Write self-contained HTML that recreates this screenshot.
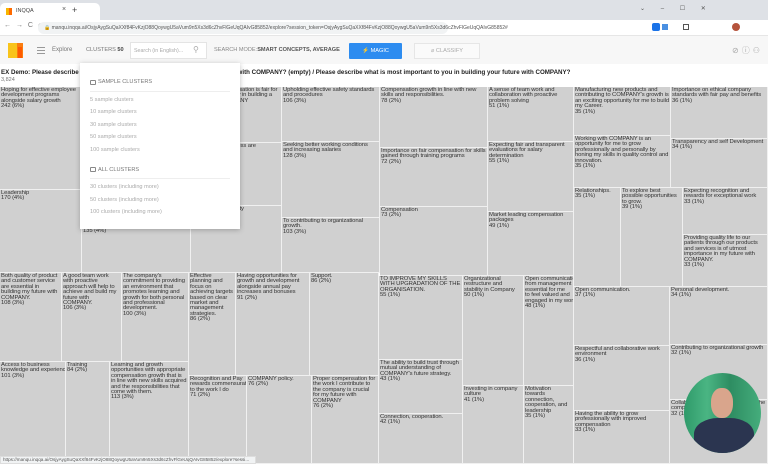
<!DOCTYPE html>
<html><head><meta charset="utf-8"><style>
*{box-sizing:border-box;margin:0;padding:0}
body{width:768px;height:464px;overflow:hidden;position:relative;background:#fff;font-family:"Liberation Sans",Arial,sans-serif}
.a{position:absolute}
.t{position:absolute;background:#d0d0d0;border-right:1.5px solid #f0f0f0;border-bottom:1.5px solid #f0f0f0;font-size:5.9px;letter-spacing:-0.1px;line-height:5.4px;color:#333;padding:1px 1px;overflow:hidden}
.dd{font-size:5.6px;color:#aaa;position:absolute;left:10px}
</style></head><body>
<div class="a" style="left:0;top:0;width:768px;height:20px;background:#dee1e6"></div>
<div class="a" style="left:0;top:3px;width:100px;height:17px;background:#fff;border-radius:5px 5px 0 0"></div>
<div class="a" style="left:6px;top:8px;width:3px;height:7px;background:#f7b500"></div><div class="a" style="left:9px;top:8px;width:3px;height:7px;background:#ff6a00"></div>
<div class="a" style="left:16px;top:8px;font-size:5.5px;color:#444">INQQA</div>
<div class="a" style="left:62px;top:6px;font-size:7px;color:#555">×</div>
<div class="a" style="left:72px;top:5px;font-size:9px;color:#444">+</div>
<div class="a" style="left:640px;top:5px;font-size:6px;color:#555;word-spacing:14px">⌄ – ☐ ✕</div>
<div class="a" style="left:0;top:20px;width:768px;height:16px;background:#fff;border-bottom:1px solid #e6e6e6"></div>
<div class="a" style="left:4px;top:22px;font-size:7px;color:#777;word-spacing:3px">← → C ⌂</div>
<div class="a" style="left:38px;top:22px;width:410px;height:12px;background:#f1f3f4;border-radius:6px"></div>
<div class="a" style="left:44px;top:25px;font-size:5px;color:#555;white-space:nowrap">🔒 manqu.inqqa.ai/OsjyAygSuQaXXf84FvKzjO88QoywgU5aVum9n5Xs3d6cZhvFlGeUqQAIvG85852/explore?session_token=OsjyAygSuQaXXf84FvKzjO88QoywgU5aVum9n5Xs3d6cZhvFlGeUqQAIvG85852#</div>
<div class="a" style="left:652px;top:23px;width:8px;height:8px;background:#1a73e8;border-radius:2px"></div>
<div class="a" style="left:662px;top:24px;width:6px;height:6px;background:#4a90e2"></div>
<div class="a" style="left:683px;top:24px;width:6px;height:6px;border:1px solid #555"></div>
<div class="a" style="left:732px;top:23px;width:8px;height:8px;background:#b5533c;border-radius:50%"></div>
<div class="a" style="left:0;top:36px;width:768px;height:28px;background:#f7f7f7"></div>
<div class="a" style="left:8px;top:43px;width:9px;height:15px;background:#f9c41a"></div>
<div class="a" style="left:17px;top:43px;width:6px;height:15px;background:#fa7d0f"></div>
<div class="a" style="left:18px;top:47px;width:4px;height:11px;background:#ff5a00"></div>
<div class="a" style="left:37px;top:47px;width:8px;height:1px;background:#999;box-shadow:0 3px 0 #999,0 6px 0 #999"></div>
<div class="a" style="left:52px;top:47px;font-size:6px;color:#777">Explore</div>
<div class="a" style="left:86px;top:47px;font-size:5.6px;color:#777">CLUSTERS <b style="color:#444">50</b></div>
<div class="a" style="left:130px;top:42px;width:77px;height:17px;border:1px solid #e4e4e4;background:#fff"></div>
<div class="a" style="left:134px;top:48px;font-size:5.3px;color:#aaa">Search (in English)...</div>
<div class="a" style="left:193px;top:45px;font-size:8px;color:#aaa">⚲</div>
<div class="a" style="left:214px;top:47px;font-size:5.6px;color:#888">SEARCH MODE:<b style="color:#555">SMART CONCEPTS, AVERAGE</b></div>
<div class="a" style="left:349px;top:43px;width:53px;height:16px;background:#2d8cf0;border-radius:1px;color:#fff;font-size:5.6px;text-align:center;line-height:16px">⚡ MAGIC</div>
<div class="a" style="left:414px;top:43px;width:66px;height:16px;border:1px solid #e6e6e6;background:#fafafa;color:#aaa;font-size:5.6px;text-align:center;line-height:15px">⌀ CLASSIFY</div>
<div class="a" style="left:732px;top:45px;font-size:8px;color:#aaa;letter-spacing:3px">⊘ⓘ⚇</div>
<div class="a" style="left:1px;top:69px;font-size:6.2px;font-weight:bold;color:#222;white-space:nowrap">EX Demo: Please describe what is most important to you in building your future with COMPANY? (empty) / Please describe what is most important to you in building your future with COMPANY?</div>
<div class="a" style="left:1px;top:77px;font-size:5.5px;color:#777">3,824</div>
<div class="t" style="left:0;top:87px;width:82px;height:103px">Hoping for effective employee development programs alongside salary growth<br>242 (6%)</div>
<div class="t" style="left:0;top:190px;width:82px;height:83px">Leadership<br>170 (4%)</div>
<div class="t" style="left:82px;top:87px;width:109px;height:186px"><br><br><br><br><br><br><br><br><br><br><br><br><br><br><br><br><br><br><br><br><br><br><br><br><br><br>135 (4%)</div>
<div class="t" style="left:191px;top:87px;width:91px;height:56px">Perceived compensation is fair for the work I do is key in building a future with COMPANY</div>
<div class="t" style="left:191px;top:143px;width:91px;height:63px">Fairness and fairness are important for me in</div>
<div class="t" style="left:191px;top:206px;width:91px;height:67px">Security and stability</div>
<div class="t" style="left:282px;top:87px;width:98px;height:55px">Upholding effective safety standards and procedures<br>106 (3%)</div>
<div class="t" style="left:282px;top:142px;width:98px;height:76px">Seeking better working conditions and increasing salaries<br>128 (3%)</div>
<div class="t" style="left:282px;top:218px;width:98px;height:55px">To contributing to organizational growth.<br>103 (3%)</div>
<div class="t" style="left:380px;top:87px;width:108px;height:61px">Compensation growth in line with new skills and responsibilities.<br>78 (2%)</div>
<div class="t" style="left:380px;top:148px;width:108px;height:59px">Importance on fair compensation for skills gained through training programs<br>72 (2%)</div>
<div class="t" style="left:380px;top:207px;width:108px;height:69px">Compensation<br>73 (2%)</div>
<div class="t" style="left:488px;top:87px;width:86px;height:55px">A sense of team work and collaboration with proactive problem solving<br>51 (1%)</div>
<div class="t" style="left:488px;top:142px;width:86px;height:70px">Expecting fair and transparent evaluations for salary determination<br>55 (1%)</div>
<div class="t" style="left:488px;top:212px;width:86px;height:64px">Market leading compensation packages<br>49 (1%)</div>
<div class="t" style="left:574px;top:87px;width:97px;height:49px">Manufacturing new products and contributing to COMPANY's growth is an exciting opportunity for me to build my Career.<br>35 (1%)</div>
<div class="t" style="left:574px;top:136px;width:97px;height:52px">Working with COMPANY is an opportunity for me to grow professionally and personally by honing my skills in quality control and innovation.<br>35 (1%)</div>
<div class="t" style="left:671px;top:87px;width:97px;height:52px">Importance on ethical company standards with fair pay and benefits<br>36 (1%)</div>
<div class="t" style="left:671px;top:139px;width:97px;height:49px">Transparency and self Development<br>34 (1%)</div>
<div class="t" style="left:574px;top:188px;width:47px;height:99px">Relationships.<br>35 (1%)</div>
<div class="t" style="left:621px;top:188px;width:62px;height:99px">To explore best possible opportunities to grow.<br>39 (1%)</div>
<div class="t" style="left:683px;top:188px;width:85px;height:47px">Expecting recognition and rewards for exceptional work<br>33 (1%)</div>
<div class="t" style="left:683px;top:235px;width:85px;height:52px">Providing quality life to our patients through our products and services is of utmost importance in my future with COMPANY.<br>33 (1%)</div>
<div class="t" style="left:379px;top:276px;width:84px;height:84px">TO IMPROVE MY SKILLS WITH UPGRADATION OF THE ORGANISATION.<br>55 (1%)</div>
<div class="t" style="left:379px;top:360px;width:84px;height:54px">The ability to build trust through mutual understanding of COMPANY's future strategy.<br>43 (1%)</div>
<div class="t" style="left:379px;top:414px;width:84px;height:50px">Connection, cooperation.<br>42 (1%)</div>
<div class="t" style="left:463px;top:276px;width:61px;height:110px">Organizational restructure and stability in Company<br>50 (1%)</div>
<div class="t" style="left:463px;top:386px;width:61px;height:78px">Investing in company culture<br>41 (1%)</div>
<div class="t" style="left:524px;top:276px;width:50px;height:110px;white-space:nowrap">Open communication<br>from management is<br>essential for me<br>to feel valued and<br>engaged in my work<br>48 (1%)</div>
<div class="t" style="left:524px;top:386px;width:50px;height:78px">Motivation towards connection, cooperation, and leadership<br>35 (1%)</div>
<div class="t" style="left:574px;top:287px;width:96px;height:59px">Open communication.<br>37 (1%)</div>
<div class="t" style="left:574px;top:346px;width:96px;height:65px">Respectful and collaborative work environment<br>36 (1%)</div>
<div class="t" style="left:574px;top:411px;width:96px;height:53px">Having the ability to grow professionally with improved compensation<br>33 (1%)</div>
<div class="t" style="left:670px;top:287px;width:98px;height:58px">Personal development.<br>34 (1%)</div>
<div class="t" style="left:670px;top:345px;width:98px;height:55px">Contributing to organizational growth<br>32 (1%)</div>
<div class="t" style="left:670px;top:400px;width:98px;height:64px">Collaboration across teams within the company<br>32 (1%)</div>
<div class="t" style="left:0;top:273px;width:62px;height:89px">Both quality of product and customer service are essential in building my future with COMPANY.<br>108 (3%)</div>
<div class="t" style="left:62px;top:273px;width:60px;height:89px">A good team work with proactive approach will help to achieve and build my future with COMPANY.<br>106 (3%)</div>
<div class="t" style="left:122px;top:273px;width:67px;height:89px">The company's commitment to providing an environment that promotes learning and growth for both personal and professional development.<br>100 (3%)</div>
<div class="t" style="left:189px;top:273px;width:47px;height:103px">Effective planning and focus on achieving targets based on clear market and management strategies.<br>86 (2%)</div>
<div class="t" style="left:236px;top:273px;width:74px;height:103px">Having opportunities for growth and development alongside annual pay increases and bonuses<br>91 (2%)</div>
<div class="t" style="left:310px;top:273px;width:69px;height:103px">Support.<br>86 (2%)</div>
<div class="t" style="left:0;top:362px;width:66px;height:102px;white-space:nowrap">Access to business<br>knowledge and experience<br>101 (3%)</div>
<div class="t" style="left:66px;top:362px;width:44px;height:102px">Training<br>84 (2%)</div>
<div class="t" style="left:110px;top:362px;width:79px;height:102px">Learning and growth opportunities with appropriate compensation growth that is in line with new skills acquired and the responsibilities that come with them.<br>113 (3%)</div>
<div class="t" style="left:189px;top:376px;width:58px;height:88px;white-space:nowrap">Recognition and Pay<br>rewards commensurate<br>to the work I do<br>71 (2%)</div>
<div class="t" style="left:247px;top:376px;width:65px;height:88px">COMPANY policy.<br>76 (2%)</div>
<div class="t" style="left:312px;top:376px;width:67px;height:88px">Proper compensation for the work I contribute to the company is crucial for my future with COMPANY<br>76 (2%)</div>
<div class="a" style="left:0;top:456px;width:256px;height:8px;background:#f1f3f4;border:1px solid #ddd;font-size:4.6px;color:#555;white-space:nowrap;overflow:hidden;padding-left:2px">https://manqu.inqqa.ai/OsjyAygSuQaXXf84FvKzjO88QoywgU5aVum9n5Xs3d6cZhvFlGeUqQAIvG85852/explore?sessi...</div>
<div class="a" style="left:80px;top:63px;width:160px;height:166px;background:#fff;box-shadow:0 1px 5px rgba(0,0,0,.25)">
<div class="a" style="left:10px;top:17px;width:6px;height:5px;border:1px solid #888;border-radius:1px"></div>
<div class="a" style="left:18px;top:16px;font-size:5.6px;color:#777">SAMPLE CLUSTERS</div>
<div class="a" style="left:10px;top:28px;width:140px;height:1px;background:#eee"></div>
<div class="dd" style="top:34px">5 sample clusters</div>
<div class="dd" style="top:46px">10 sample clusters</div>
<div class="dd" style="top:59px">30 sample clusters</div>
<div class="dd" style="top:71px">50 sample clusters</div>
<div class="dd" style="top:84px">100 sample clusters</div>
<div class="a" style="left:10px;top:104px;width:6px;height:5px;border:1px solid #888;border-radius:1px"></div>
<div class="a" style="left:18px;top:104px;font-size:5.6px;color:#777">ALL CLUSTERS</div>
<div class="a" style="left:10px;top:115px;width:140px;height:1px;background:#eee"></div>
<div class="dd" style="top:121px">30 clusters (including more)</div>
<div class="dd" style="top:134px">50 clusters (including more)</div>
<div class="dd" style="top:146px">100 clusters (including more)</div>
</div>
<div class="a" style="left:684px;top:373px;width:77px;height:80px;border-radius:50%;background:linear-gradient(90deg,#2f9a6a,#4ab583 30%,#2e8d62 60%,#45ad7c);overflow:hidden">
<div class="a" style="left:27px;top:15px;width:22px;height:30px;border-radius:45%;background:#d9a58c"></div>
<div class="a" style="left:10px;top:45px;width:60px;height:40px;border-radius:40% 40% 0 0;background:#2b3550"></div>
</div>
</body></html>
